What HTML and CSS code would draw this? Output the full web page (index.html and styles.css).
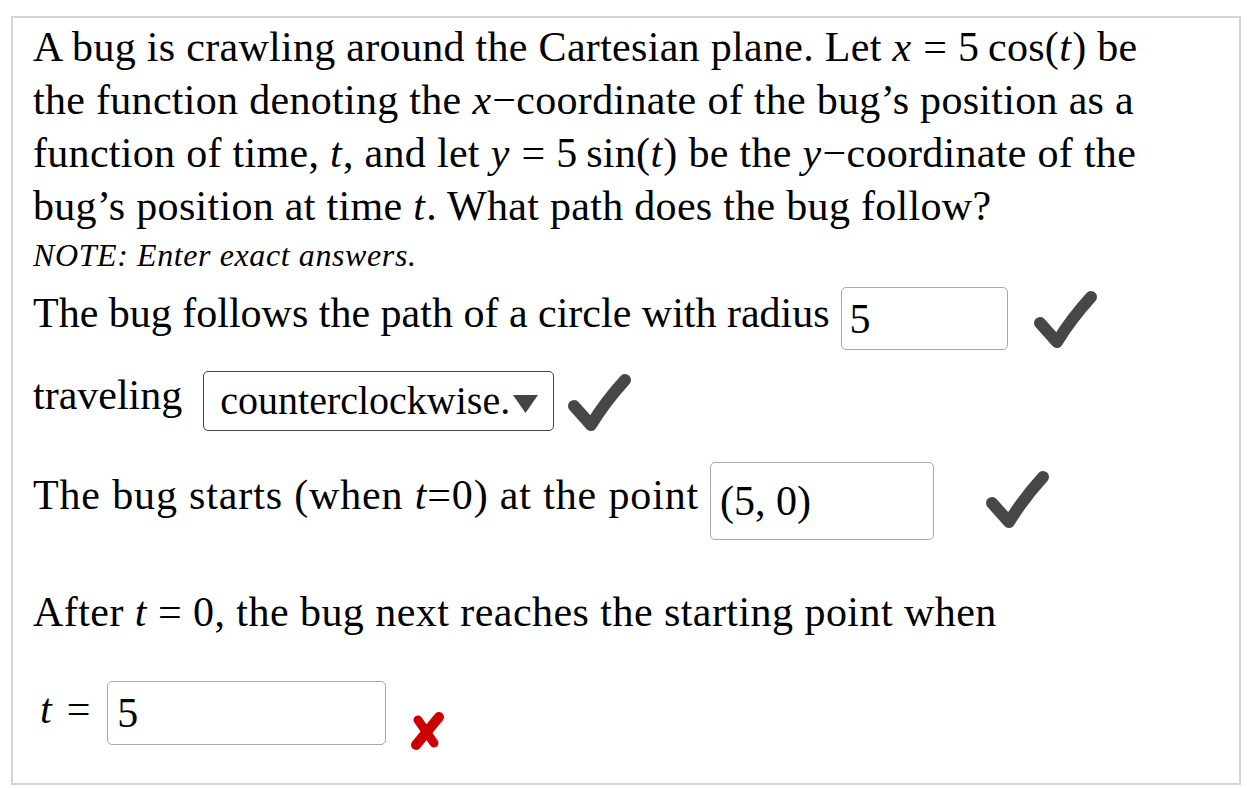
FILE: index.html
```html
<!DOCTYPE html>
<html lang="en">
<head>
<meta charset="utf-8">
<title>Bug on the Cartesian plane</title>
<link rel="stylesheet" href="styles.css">
</head>
<body>
<div class="card">
  <p class="q">A bug is crawling around the Cartesian plane. Let <span class="m"><i>x</i> = 5&thinsp;cos(<i>t</i>)</span> be the function denoting the <span class="m"><i>x</i>−coordinate</span> of the bug’s position as a function of time, <i>t</i>, and let <span class="m"><i>y</i> = 5&thinsp;sin(<i>t</i>)</span> be the <span class="m"><i>y</i>−coordinate</span> of the bug’s position at time <i>t</i>. What path does the bug follow?</p>
  <p class="note">NOTE: Enter exact answers.</p>

  <div class="row row-radius">
    <span class="label">The bug follows the path of a circle with radius</span>
    <input class="ans ans-radius" type="text" value="5" readonly>
    <svg class="mark mark-radius" width="66" height="62" viewBox="0 0 66 62" aria-label="correct"><path d="M8 34 L25 53 Q39 30 59 8" fill="none" stroke="#474747" stroke-width="12" stroke-linecap="round" stroke-linejoin="round"/></svg>
  </div>

  <div class="row row-dir">
    <span class="label">traveling</span>
    <div class="select"><span>counterclockwise.</span><svg width="25" height="18" viewBox="0 0 25 18"><polygon points="0,0 25,0 12.5,18" fill="#444"/></svg></div>
    <svg class="mark mark-dir" width="66" height="62" viewBox="0 0 66 62" aria-label="correct"><path d="M8 34 L25 53 Q39 30 59 8" fill="none" stroke="#474747" stroke-width="12" stroke-linecap="round" stroke-linejoin="round"/></svg>
  </div>

  <div class="row row-start">
    <span class="label label-start">The bug starts (when <i>t</i>=0) at the point</span>
    <input class="ans ans-start" type="text" value="(5, 0)" readonly>
    <svg class="mark mark-start" width="66" height="62" viewBox="0 0 66 62" aria-label="correct"><path d="M8 34 L25 53 Q39 30 59 8" fill="none" stroke="#474747" stroke-width="12" stroke-linecap="round" stroke-linejoin="round"/></svg>
  </div>

  <div class="row row-after">
    <span class="label label-after">After <i>t</i> = 0, the bug next reaches the starting point when</span>
  </div>

  <div class="row row-t">
    <span class="label tlabel"><i>t</i><span class="eq">=</span></span>
    <input class="ans ans-t" type="text" value="5" readonly>
    <svg class="mark mark-x" width="40" height="42" viewBox="0 0 40 42" aria-label="incorrect"><path d="M31 7 L8 35" fill="none" stroke="#cc0000" stroke-width="10" stroke-linecap="round"/><path d="M10 10 L26 33" fill="none" stroke="#cc0000" stroke-width="9" stroke-linecap="round"/></svg>
  </div>
</div>
</body>
</html>
```

FILE: styles.css
```css
body {
  margin: 0;
  background: #ffffff;
  color: #000000;
  font-family: "Liberation Serif", "Times New Roman", serif;
}

.card {
  box-sizing: border-box;
  width: 1230px;
  height: 769px;
  margin: 16px 0 0 11px;
  padding: 3px 0 0 20px;
  border: 2px solid #d4d4d4;
}

.q {
  margin: 0;
  width: 1125px;
  font-size: 42px;
  line-height: 53px;
  letter-spacing: 0.3px;
}

.q i {
  padding-right: 1px;
}

.m {
  white-space: nowrap;
}

.note {
  margin: 2px 0 0;
  font-size: 32px;
  line-height: 40px;
  font-style: italic;
  letter-spacing: 0.6px;
}

.row {
  display: flex;
  align-items: flex-start;
  font-size: 42px;
  line-height: 53px;
  white-space: nowrap;
}

.row-radius { margin-top: 12px; height: 63px; }
.row-dir { margin-top: 19px; height: 62px; }
.row-start { margin-top: 31px; height: 78px; }
.row-after { margin-top: 46px; height: 53px; }
.row-t { margin-top: 42px; height: 64px; }

.label-start {
  margin-top: 7px;
  letter-spacing: 0.85px;
}

.label-after {
  letter-spacing: 0.45px;
}

.tlabel {
  margin: 2px 0 0 7px;
}

.eq {
  margin-left: 15px;
}

.ans {
  box-sizing: border-box;
  margin: 0;
  padding: 0 8px;
  font-family: "Liberation Serif", "Times New Roman", serif;
  font-size: 42px;
  color: #000000;
  background: #ffffff;
  border: 1px solid #a8a8a8;
  border-radius: 5px;
  outline: none;
}

.ans-radius { width: 167px; height: 63px; margin-left: 11px; }
.ans-start { width: 224px; height: 78px; margin-left: 11px; padding-left: 9px; }
.ans-t { width: 279px; height: 64px; margin-left: 17px; padding-left: 9px; }

.select {
  display: flex;
  align-items: flex-start;
  box-sizing: border-box;
  height: 60px;
  margin: 2px 0 0 21px;
  padding: 0 15px 0 16px;
  border: 1px solid #444444;
  border-radius: 5px;
  font-size: 40px;
  line-height: 58px;
}

.select svg {
  margin: 23px 0 0 3px;
}

.mark { flex: none; }
.mark-radius { margin: 2px 0 0 24px; }
.mark-dir { margin: 3px 0 0 12px; }
.mark-start { margin: 7px 0 0 50px; }
.mark-x { margin: 29px 0 0 22px; }
```
